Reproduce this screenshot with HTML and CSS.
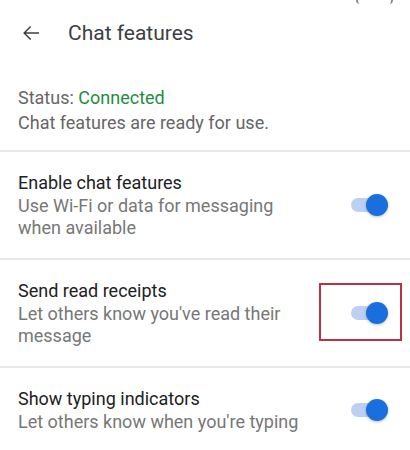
FILE: index.html
```html
<!DOCTYPE html>
<html lang="en">
<head>
    <meta charset="UTF-8">
    <meta name="viewport" content="width=device-width, initial-scale=1.0">
    <title>Chat features</title>
    <link rel="stylesheet" href="styles.css">
</head>
<body>
    <div class="status-strip"><span class="status-icon"></span></div>
    <header class="app-bar">
        <svg class="back" viewBox="0 0 24 24" width="24" height="24">
            <path d="M20 11.25H6.9l5.3-5.3L11.2 4.9 4.1 12l7.1 7.1 1.05-1.05-5.35-5.3H20z" fill="#3c4043"/>
        </svg>
        <h1 class="title">Chat features</h1>
    </header>

    <section class="status">
        <p>Status: <span class="connected">Connected</span></p>
        <p>Chat features are ready for use.</p>
    </section>

    <div class="setting">
        <div class="setting-text">
            <div class="setting-title">Enable chat features</div>
            <div class="setting-sub">Use Wi-Fi or data for messaging when available</div>
        </div>
        <span class="switch"></span>
    </div>

    <div class="setting">
        <div class="setting-text">
            <div class="setting-title">Send read receipts</div>
            <div class="setting-sub">Let others know you've read their message</div>
        </div>
        <span class="switch"><span class="callout"></span></span>
    </div>

    <div class="setting">
        <div class="setting-text">
            <div class="setting-title">Show typing indicators</div>
            <div class="setting-sub">Let others know when you're typing</div>
        </div>
        <span class="switch"></span>
    </div>
</body>
</html>
```

FILE: styles.css
```css
body {
    font-family: Roboto, "Liberation Sans", Arial, sans-serif;
    background-color: #fff;
    margin: 0;
    padding: 0;
    width: 410px;
}

.status-strip {
    height: 5px;
    display: flex;
    justify-content: flex-end;
}

.status-icon {
    width: 33px;
    height: 4px;
    margin-right: 17px;
    border-left: 2px solid #8a8a8a;
    border-right: 2px solid #8a8a8a;
    border-radius: 0 0 6px 6px;
}

.app-bar {
    height: 61px;
    display: flex;
    align-items: center;
    padding-left: 19px;
}

.back {
    display: block;
    margin-top: -6px;
}

.title {
    margin: -6px 0 0 25px;
    font-size: 21px;
    font-weight: 400;
    color: #3c4043;
}

.status {
    padding: 19px 18px 15px;
    border-bottom: 2px solid #e8e8e8;
}

.status p {
    margin: 0;
    font-size: 18px;
    line-height: 25px;
    color: #666;
}

.connected {
    color: #1e8e3e;
}

.setting {
    display: flex;
    align-items: center;
    padding: 19px 22px 19px 18px;
    border-bottom: 2px solid #e8e8e8;
}

.setting:last-child {
    border-bottom: none;
}

.setting-text {
    flex: 1;
    padding-right: 35px;
}

.setting-title {
    font-size: 18px;
    line-height: 24px;
    color: #202124;
}

.setting-sub {
    font-size: 18px;
    line-height: 22px;
    color: #777;
}

.switch {
    position: relative;
    width: 37px;
    height: 22px;
    flex-shrink: 0;
}

.switch::before {
    content: "";
    position: absolute;
    left: 0;
    top: 4px;
    width: 34px;
    height: 14px;
    border-radius: 7px;
    background-color: #bdd0f4;
}

.switch::after {
    content: "";
    position: absolute;
    right: 0;
    top: 0;
    width: 22px;
    height: 22px;
    border-radius: 50%;
    background-color: #1a6fdf;
    box-shadow: 0 1px 3px rgba(0, 0, 0, 0.25);
}

.callout {
    position: absolute;
    left: -32px;
    right: -14px;
    top: -19px;
    bottom: -17px;
    border: 2px solid #b83540;
}
```
